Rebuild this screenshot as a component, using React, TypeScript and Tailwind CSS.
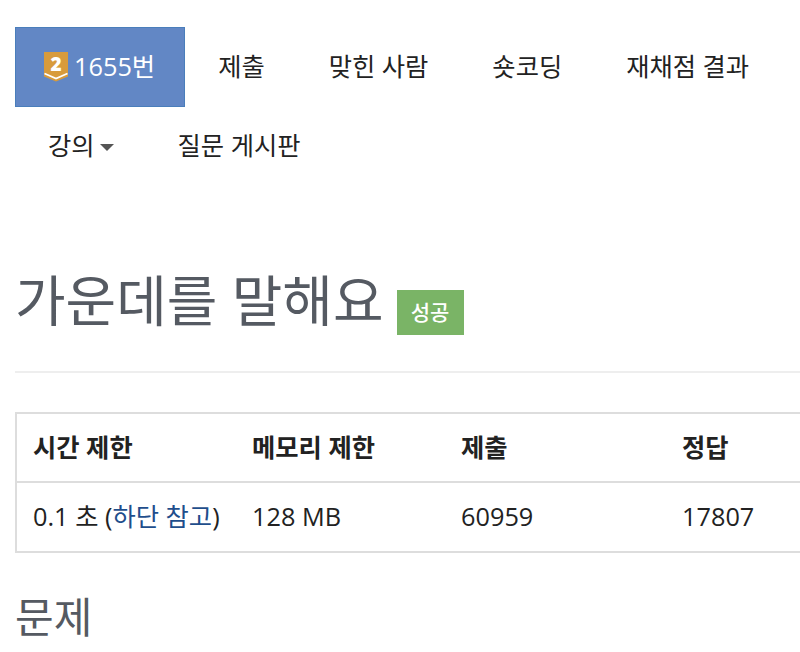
import { ReactNode } from 'react'

function NavItem({ children, active, className }: { children: ReactNode; active?: boolean; className?: string }) {
  return (
    <a
      className={
        (active
          ? 'mr-[1px] flex h-[79.5px] items-center border border-[#4a7ebb] bg-[#6287c5] px-[28px] text-white'
          : 'flex h-[79.5px] items-center px-[32px] text-[#222]') + (className ? ' ' + className : '')
      }
    >
      {children}
    </a>
  )
}

function Badge() {
  return (
    <svg width="24" height="30" viewBox="0 0 24 30" className="mr-[6px] shrink-0 overflow-visible">
      <path d="M0 0H24V24.5L12 29.5L0 24.5Z" fill="#d89b3c" />
      <path d="M0.5 21.5L12 26.5L23.5 21.5" fill="none" stroke="#fff" strokeWidth="1.8" />
      <text x="12" y="18.5" textAnchor="middle" fontSize="19" fontWeight="800" fill="#fff" fontFamily="'Open Sans', sans-serif">
        2
      </text>
    </svg>
  )
}

export default function App() {
  const cell = 'px-[16px] py-[12px] border-t-2 border-[#ddd] text-left'
  return (
    <div className="h-[652px] w-[800px] overflow-hidden bg-white pl-[15px] pt-[27px] font-['Open_Sans','Noto_Sans_CJK_KR',sans-serif] text-[25.3px] text-[#222]">
      <nav className="flex w-[785px] flex-wrap">
        <NavItem active>
          <Badge />
          <span className="pr-[1px]">1655번</span>
        </NavItem>
        <NavItem>제출</NavItem>
        <NavItem>맞힌 사람</NavItem>
        <NavItem>숏코딩</NavItem>
        <NavItem>재채점 결과</NavItem>
        <NavItem className="ml-[1px]">
          강의
          <span className="ml-[5px] mt-[3px] h-0 w-0 border-x-[7.5px] border-t-[7.5px] border-x-transparent border-t-[#555]" />
        </NavItem>
        <NavItem>질문 게시판</NavItem>
      </nav>

      <div className="mt-[75px] flex items-end border-b-2 border-[#eee] pb-[32px]">
        <h1 className="text-[55px] leading-[78px] font-normal text-[#555a62]">가운데를 말해요</h1>
        <span className="mb-[4px] ml-[13px] flex h-[45px] w-[67px] items-center justify-center bg-[#7ab466] text-[21px] font-medium text-white">
          성공
        </span>
      </div>

      <table className="mt-[39px] w-[820px] table-fixed border-2 border-[#ddd]">
        <thead>
          <tr className="h-[69px] font-bold">
            <th className={`${cell} w-[220px] border-t-0`}>시간 제한</th>
            <th className={`${cell} w-[209px] border-t-0`}>메모리 제한</th>
            <th className={`${cell} w-[221px] border-t-0`}>제출</th>
            <th className={`${cell} border-t-0`}>정답</th>
          </tr>
        </thead>
        <tbody>
          <tr className="h-[70px]">
            <td className={cell}>
              0.1 초 (<a className="text-[#1f4e8c]">하단 참고</a>)
            </td>
            <td className={cell}>128 MB</td>
            <td className={cell}>60959</td>
            <td className={cell}>17807</td>
          </tr>
        </tbody>
      </table>

      <h2 className="mt-[34px] text-[42px] leading-[60px] font-normal text-[#555a62]">문제</h2>
    </div>
  )
}
